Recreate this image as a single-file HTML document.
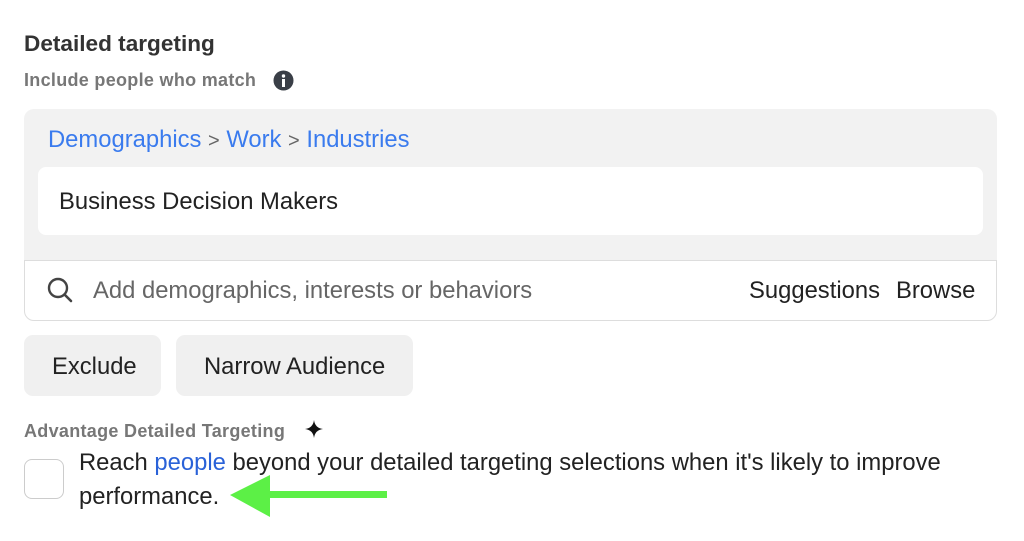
<!DOCTYPE html><html><head><style>
body{margin:0;width:1024px;height:541px;background:#fff;font-family:"Liberation Sans",sans-serif;position:relative;overflow:hidden}
.a{position:absolute;white-space:nowrap}
</style></head><body>
<div class="a" style="left:24px;top:31px;font-size:22.6px;font-weight:bold;color:#333">Detailed targeting</div>
<div class="a" style="left:24px;top:70px;font-size:18px;letter-spacing:0.3px;font-weight:bold;color:#777">Include people who match</div>
<svg class="a" style="left:273px;top:70px" width="21" height="21"><circle cx="10.5" cy="10.5" r="10" fill="#3a3f47"/><circle cx="10.5" cy="6" r="1.7" fill="#fff"/><rect x="9" y="9" width="3" height="8" fill="#fff"/></svg>
<div class="a" style="left:24px;top:109px;width:973px;height:211px;background:#f2f2f2;border-radius:10px"></div>
<div class="a" style="left:48px;top:126px;font-size:23.8px;color:#3a7bee">Demographics <span style="color:#666;font-size:20px">&gt;</span> Work <span style="color:#666;font-size:20px">&gt;</span> Industries</div>
<div class="a" style="left:38px;top:167px;width:945px;height:68px;background:#fff;border-radius:8px"></div>
<div class="a" style="left:59px;top:188px;font-size:23.8px;color:#222">Business Decision Makers</div>
<div class="a" style="left:24px;top:260px;width:971px;height:59px;background:#fff;border:1px solid #ddd;border-radius:0 0 10px 10px"></div>
<svg class="a" style="left:46px;top:276px" width="28" height="28"><circle cx="12" cy="12" r="9" fill="none" stroke="#444" stroke-width="2.4"/><line x1="18.5" y1="18.5" x2="25" y2="25" stroke="#444" stroke-width="2.6" stroke-linecap="round"/></svg>
<div class="a" style="left:93px;top:277px;font-size:23.8px;color:#666">Add demographics, interests or behaviors</div>
<div class="a" style="left:749px;top:277px;font-size:23.8px;color:#222">Suggestions</div>
<div class="a" style="left:896px;top:277px;font-size:23.8px;color:#222">Browse</div>
<div class="a" style="left:24px;top:335px;width:137px;height:61px;background:#f0f0f0;border-radius:9px"></div>
<div class="a" style="left:52px;top:353px;font-size:23.8px;color:#222">Exclude</div>
<div class="a" style="left:176px;top:335px;width:237px;height:61px;background:#f0f0f0;border-radius:9px"></div>
<div class="a" style="left:204px;top:353px;font-size:23.8px;color:#222">Narrow Audience</div>
<div class="a" style="left:24px;top:421px;font-size:18px;letter-spacing:0.3px;font-weight:bold;color:#777">Advantage Detailed Targeting</div>
<svg class="a" style="left:304px;top:419px" width="20" height="20"><path d="M10 1 Q11 9 19 10 Q11 11 10 19 Q9 11 1 10 Q9 9 10 1Z" fill="#111"/></svg>
<div class="a" style="left:24px;top:459px;width:40px;height:40px;border:1.5px solid #ccc;border-radius:8px;box-sizing:border-box"></div>
<div class="a" style="left:79px;top:446px;font-size:23.8px;color:#222;line-height:34px">Reach <span style="color:#2a62d8">people</span> beyond your detailed targeting selections when it's likely to improve<br>performance.</div>
<svg class="a" style="left:228px;top:474px" width="162" height="44"><polygon points="2,21 42,1 42,17 159,17 159,24 42,24 42,43" fill="#5cf046"/></svg>
</body></html>
